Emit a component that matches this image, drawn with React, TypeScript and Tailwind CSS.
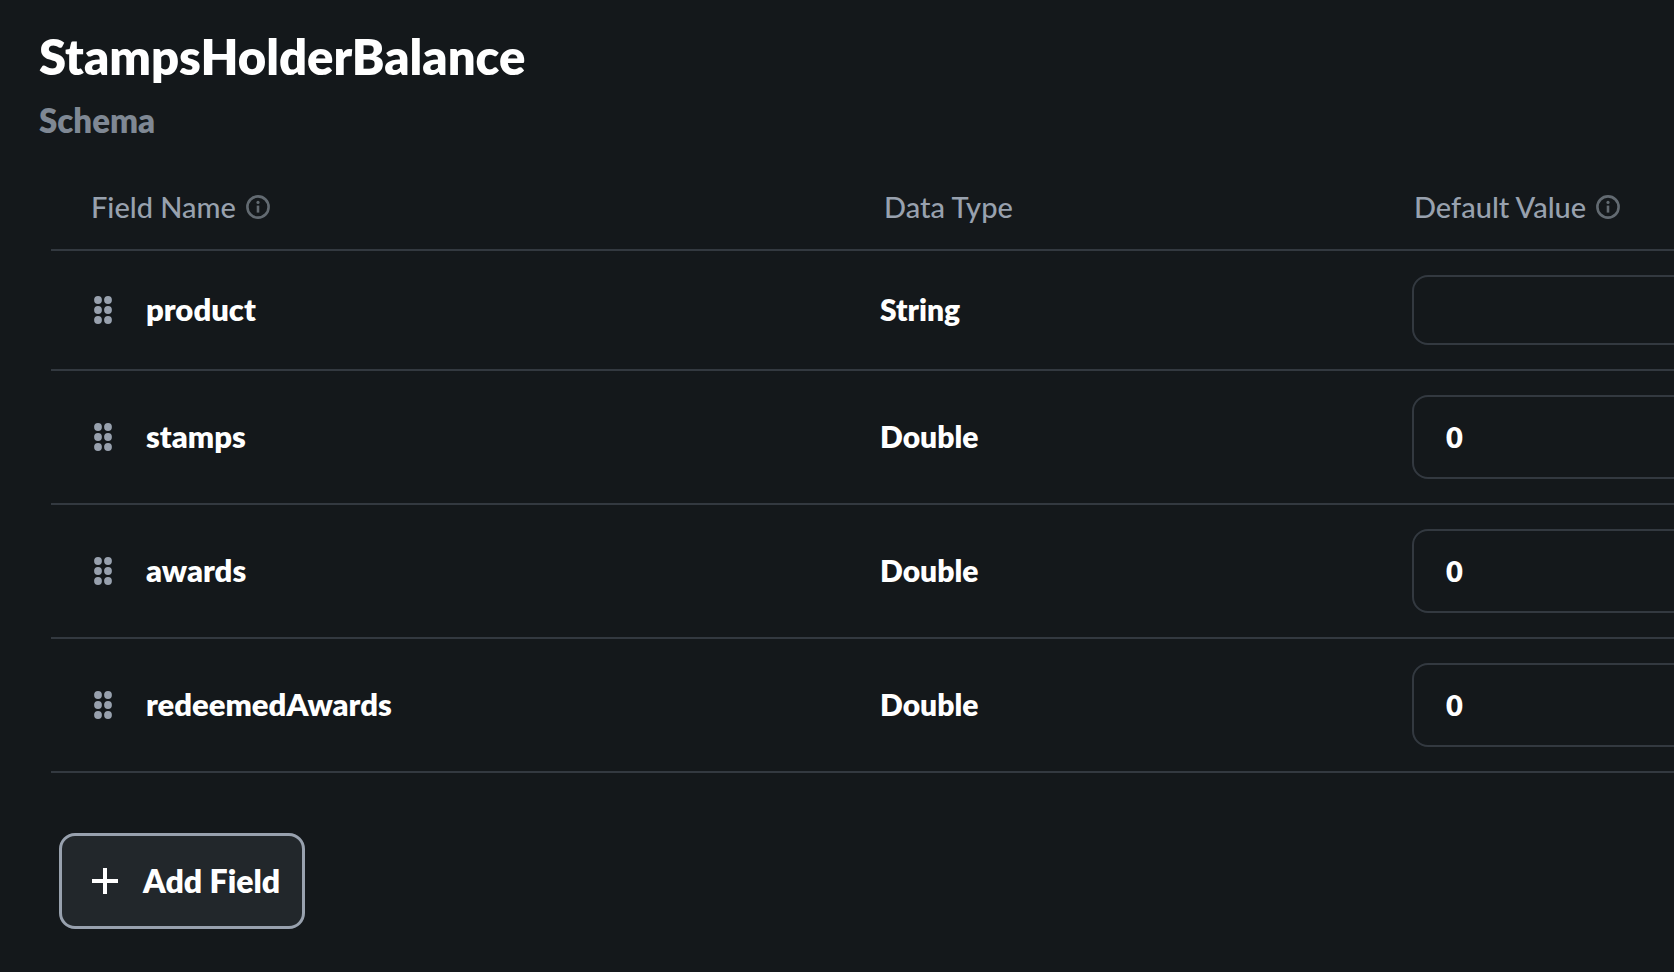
import { useState } from "react";

interface Field {
  name: string;
  type: "String" | "Double";
  defaultValue: string;
}

const initialFields: Field[] = [
  { name: "product", type: "String", defaultValue: "" },
  { name: "stamps", type: "Double", defaultValue: "0" },
  { name: "awards", type: "Double", defaultValue: "0" },
  { name: "redeemedAwards", type: "Double", defaultValue: "0" },
];

function InfoIcon() {
  return (
    <svg className="h-6 w-6 shrink-0 text-[#626a71]" viewBox="0 0 24 24" fill="none" aria-hidden="true">
      <circle cx="12" cy="12" r="10.6" stroke="currentColor" strokeWidth="2.6" />
      <circle cx="12" cy="7.4" r="1.6" fill="currentColor" />
      <path d="M12 10.6v7" stroke="currentColor" strokeWidth="2.6" />
    </svg>
  );
}

function GripIcon() {
  return (
    <svg className="h-7 w-[18px]" viewBox="0 0 18 28" fill="currentColor" aria-hidden="true">
      {[4, 14, 24].map((cy) => (
        <g key={cy}>
          <circle cx="4" cy={cy} r="3.9" />
          <circle cx="14" cy={cy} r="3.9" />
        </g>
      ))}
    </svg>
  );
}

function PlusIcon() {
  return (
    <svg className="h-[26px] w-[26px]" viewBox="0 0 26 26" aria-hidden="true">
      <path d="M13 0v26M0 13h26" stroke="currentColor" strokeWidth="4" />
    </svg>
  );
}

export default function App() {
  const [fields, setFields] = useState<Field[]>(initialFields);

  const setDefault = (index: number, value: string) =>
    setFields(fields.map((f, i) => (i === index ? { ...f, defaultValue: value } : f)));

  const addField = () =>
    setFields([...fields, { name: `field${fields.length + 1}`, type: "String", defaultValue: "" }]);

  return (
    <main className="min-h-screen overflow-hidden bg-[#14181b] pt-7 pb-10 font-['Lato',sans-serif] text-white">
      {/* Title */}
      <header className="px-[39px]">
        <h1 className="text-[49px] leading-[56px] font-extrabold">StampsHolderBalance</h1>
        <h2 className="mt-4 text-[33px] leading-10 font-extrabold text-[#7f8894]">Schema</h2>
      </header>

      {/* Fields run past the right edge of the panel */}
      <div className="mt-6 pl-[51px]">
        <table className="w-[calc(100%+33px)] table-fixed border-collapse text-left text-[30px] leading-9">
          <thead>
            <tr className="h-[86px] border-b-2 border-[#333940] text-[29px] text-[#98a1ae]">
              <th scope="col" className="w-1/2 pl-10 font-medium">
                <span className="flex items-center gap-[10px]">
                  Field Name
                  <InfoIcon />
                </span>
              </th>
              <th scope="col" className="w-[533px] pl-[5px] font-medium">
                Data Type
              </th>
              <th scope="col" className="pl-0.5 font-medium">
                <span className="flex items-center gap-[10px]">
                  Default Value
                  <InfoIcon />
                </span>
              </th>
            </tr>
          </thead>
          <tbody>
            {fields.map((field, i) => (
              <tr key={field.name} className="border-b-2 border-[#333940] font-extrabold">
                <td className="pl-[43px]">
                  <div className="flex items-center gap-[34px]">
                    <button type="button" aria-label={`Move ${field.name}`} className="cursor-grab text-[#98a1ae]">
                      <GripIcon />
                    </button>
                    <span className="pb-0.5 text-[31px]">{field.name}</span>
                  </div>
                </td>
                <td className="pb-0.5 pl-px">{field.type}</td>
                <td className="py-6">
                  <input
                    type="text"
                    aria-label={`Default value for ${field.name}`}
                    value={field.defaultValue}
                    onChange={(e) => setDefault(i, e.target.value)}
                    className={`block w-full rounded-2xl border-2 border-[#333940] bg-transparent px-8 pb-0.5 text-[29px] outline-none ${
                      field.type === "Double" ? "h-[84px]" : "h-[70px]"
                    }`}
                  />
                </td>
              </tr>
            ))}
          </tbody>
        </table>
      </div>

      <button
        type="button"
        onClick={addField}
        className="mt-[60px] ml-[59px] flex h-24 items-center gap-[25px] rounded-2xl border-[3px] border-[#98a1ae] bg-[#22272b] pr-[22px] pl-[30px] text-[32px] font-extrabold"
      >
        <PlusIcon />
        Add Field
      </button>
    </main>
  );
}
